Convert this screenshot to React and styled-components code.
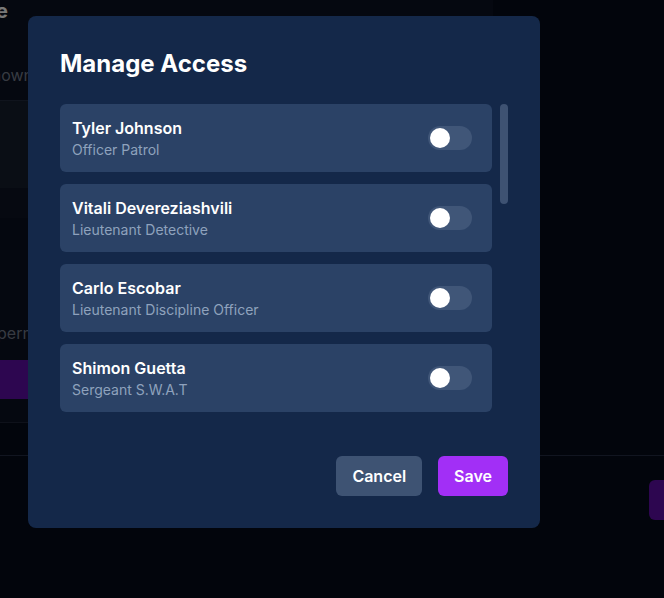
import React, { useState, useRef, useLayoutEffect } from "react";
import styled, { createGlobalStyle } from "styled-components";

const Global = createGlobalStyle`
  html, body { margin: 0; padding: 0; }
  body {
    background: #040a18;
    font-family: Inter, "Noto Sans", "Liberation Sans", sans-serif;
    overflow: hidden;
    -webkit-font-smoothing: antialiased;
  }
  * { box-sizing: border-box; }
`;

/* ---------- underlying page (dimmed by the backdrop) ---------- */

const Page = styled.div`
  width: 664px;
  height: 598px;
  display: flex;
  flex-direction: column;
  overflow: hidden;
  background: #040a18;
`;

const Workspace = styled.div`
  display: flex;
  height: 455px;
  flex-shrink: 0;
`;

const Panel = styled.section`
  width: 493px;
  height: 423px;
  display: flex;
  flex-direction: column;
  overflow: hidden;
  background: #0a1020;
  border-bottom: 1px solid #1c2334;
`;

const TailLine = styled.div`
  display: flex;
  justify-content: flex-end;
  flex-shrink: 0;
  width: ${(p) => p.$end}px;
  margin-top: ${(p) => p.$top || 0}px;
  white-space: nowrap;
  font-size: ${(p) => p.$size}px;
  line-height: ${(p) => p.$lh}px;
  font-weight: ${(p) => p.$weight || 400};
  color: ${(p) => p.$color};
`;

const LeadLine = styled.div`
  flex-shrink: 0;
  margin: ${(p) => p.$top}px 0 0 -3px;
  white-space: nowrap;
  font-size: 16px;
  line-height: 18px;
  color: #6f7685;
`;

const TableBox = styled.div`
  flex-shrink: 0;
  height: 88px;
  margin-top: 13px;
  background: #151c2b;
  border-top: 1px solid #20283a;
`;

const Band = styled.div`
  flex-shrink: 0;
  height: ${(p) => p.$h}px;
  background: ${(p) => p.$bg};
`;

const GhostButton = styled.div`
  flex-shrink: 0;
  width: 320px;
  height: 39px;
  margin: ${(p) => p.$top}px 0 0 -20px;
  background: #5a0ca0;
  border-radius: 6px;
`;

const PageFooter = styled.footer`
  flex: 1;
  display: flex;
  align-items: flex-start;
  padding: 24px 0 0 649px;
  border-top: 1px solid #222a40;
`;

const FooterButton = styled.div`
  flex-shrink: 0;
  width: 110px;
  height: 40px;
  border-radius: 6px;
  background: #5a0ca0;
`;

/* ---------- modal ---------- */

const Backdrop = styled.div`
  position: fixed;
  inset: 0;
  background: rgba(0, 0, 0, 0.5);
  display: flex;
  align-items: flex-start;
  justify-content: flex-start;
  padding: 16px 0 0 28px;
`;

const Dialog = styled.div`
  width: 512px;
  padding: 32px;
  background: #142849;
  border-radius: 8px;
  display: flex;
  flex-direction: column;
`;

const Title = styled.h2`
  margin: 0 0 24px;
  font-size: 24px;
  line-height: 32px;
  font-weight: 700;
  color: #ffffff;
`;

const ListFrame = styled.div`
  display: flex;
  gap: 8px;
  height: 320px;
`;

const List = styled.div`
  flex: 1;
  min-width: 0;
  overflow-y: auto;
  display: flex;
  flex-direction: column;
  gap: 12px;
  scrollbar-width: none;
  &::-webkit-scrollbar { display: none; }
`;

const Track = styled.div`
  position: relative;
  width: 8px;
  flex-shrink: 0;
`;

const Thumb = styled.div`
  position: absolute;
  left: 0;
  width: 8px;
  border-radius: 4px;
  background: #3e5272;
`;

const Row = styled.div`
  flex-shrink: 0;
  display: flex;
  align-items: center;
  justify-content: space-between;
  padding: 12px 20px 12px 12px;
  background: #2b4266;
  border-radius: 6px;
`;

const Person = styled.div`
  display: flex;
  flex-direction: column;
`;

const Name = styled.span`
  font-size: 16px;
  line-height: 24px;
  font-weight: 600;
  color: #ffffff;
`;

const Rank = styled.span`
  font-size: 14px;
  line-height: 20px;
  color: #8fa2bd;
`;

const Switch = styled.button`
  width: 44px;
  height: 24px;
  padding: 2px;
  border: none;
  border-radius: 12px;
  background: ${(p) => (p.$on ? "#a32ff7" : "#405678")};
  display: flex;
  align-items: center;
  justify-content: ${(p) => (p.$on ? "flex-end" : "flex-start")};
  cursor: pointer;
`;

const Knob = styled.span`
  width: 20px;
  height: 20px;
  border-radius: 50%;
  background: #ffffff;
`;

const Actions = styled.div`
  margin-top: 32px;
  display: flex;
  justify-content: flex-end;
  gap: 16px;
`;

const ActionButton = styled.button`
  height: 40px;
  padding: 0 16px;
  border: none;
  border-radius: 6px;
  font-family: inherit;
  font-size: 16px;
  font-weight: 600;
  color: #ffffff;
  background: ${(p) => (p.$primary ? "#a22ff6" : "#3e5373")};
  cursor: pointer;
`;

const people = [
  { name: "Tyler Johnson", rank: "Officer Patrol" },
  { name: "Vitali Devereziashvili", rank: "Lieutenant Detective" },
  { name: "Carlo Escobar", rank: "Lieutenant Discipline Officer" },
  { name: "Shimon Guetta", rank: "Sergeant S.W.A.T" },
  { name: "Marcus Reed", rank: "Officer Traffic" },
  { name: "Dana Levi", rank: "Captain Investigations" },
  { name: "Jamal Carter", rank: "Detective Narcotics" },
  { name: "Elena Petrova", rank: "Officer K-9" },
  { name: "Noah Brooks", rank: "Sergeant Patrol" },
  { name: "Ava Martinez", rank: "Officer Community Relations" },
  { name: "Liam O'Connor", rank: "Lieutenant Internal Affairs" },
  { name: "Sofia Rossi", rank: "Detective Homicide" },
  { name: "Daniel Kim", rank: "Officer Cyber Crimes" },
];

export default function App() {
  const [access, setAccess] = useState(() => people.map(() => false));
  const [thumb, setThumb] = useState({ top: 0, height: 100 });
  const listRef = useRef(null);

  const measure = () => {
    const el = listRef.current;
    if (!el) return;
    const { clientHeight, scrollHeight, scrollTop } = el;
    const height = (clientHeight * clientHeight) / scrollHeight;
    const top =
      scrollHeight > clientHeight
        ? (scrollTop / (scrollHeight - clientHeight)) * (clientHeight - height)
        : 0;
    setThumb({ top, height });
  };

  useLayoutEffect(measure, []);

  const toggle = (i) =>
    setAccess((a) => a.map((v, j) => (j === i ? !v : v)));

  return (
    <>
      <Global />
      <Page>
        <Workspace>
          <Panel>
            <TailLine $end={8} $size={20} $lh={22} $weight={700} $color="#f0f0f0">
              Access Control Structure
            </TailLine>
            <TailLine $end={33} $top={41} $size={16} $lh={24} $color="#6f7685">
              Only roles that you manage are shown
            </TailLine>
            <TableBox />
            <Band $h={30} $bg="#0c1222" />
            <Band $h={32} $bg="#080e1e" />
            <LeadLine $top={74}>permissions for this role</LeadLine>
            <GhostButton $top={18} />
          </Panel>
        </Workspace>
        <PageFooter>
          <FooterButton />
        </PageFooter>
      </Page>

      <Backdrop>
        <Dialog role="dialog" aria-label="Manage Access">
          <Title>Manage Access</Title>
          <ListFrame>
            <List ref={listRef} onScroll={measure}>
              {people.map((p, i) => (
                <Row key={p.name}>
                  <Person>
                    <Name>{p.name}</Name>
                    <Rank>{p.rank}</Rank>
                  </Person>
                  <Switch
                    type="button"
                    aria-pressed={access[i]}
                    $on={access[i]}
                    onClick={() => toggle(i)}
                  >
                    <Knob />
                  </Switch>
                </Row>
              ))}
            </List>
            <Track>
              <Thumb style={{ top: thumb.top, height: thumb.height }} />
            </Track>
          </ListFrame>
          <Actions>
            <ActionButton type="button">Cancel</ActionButton>
            <ActionButton type="button" $primary>
              Save
            </ActionButton>
          </Actions>
        </Dialog>
      </Backdrop>
    </>
  );
}
